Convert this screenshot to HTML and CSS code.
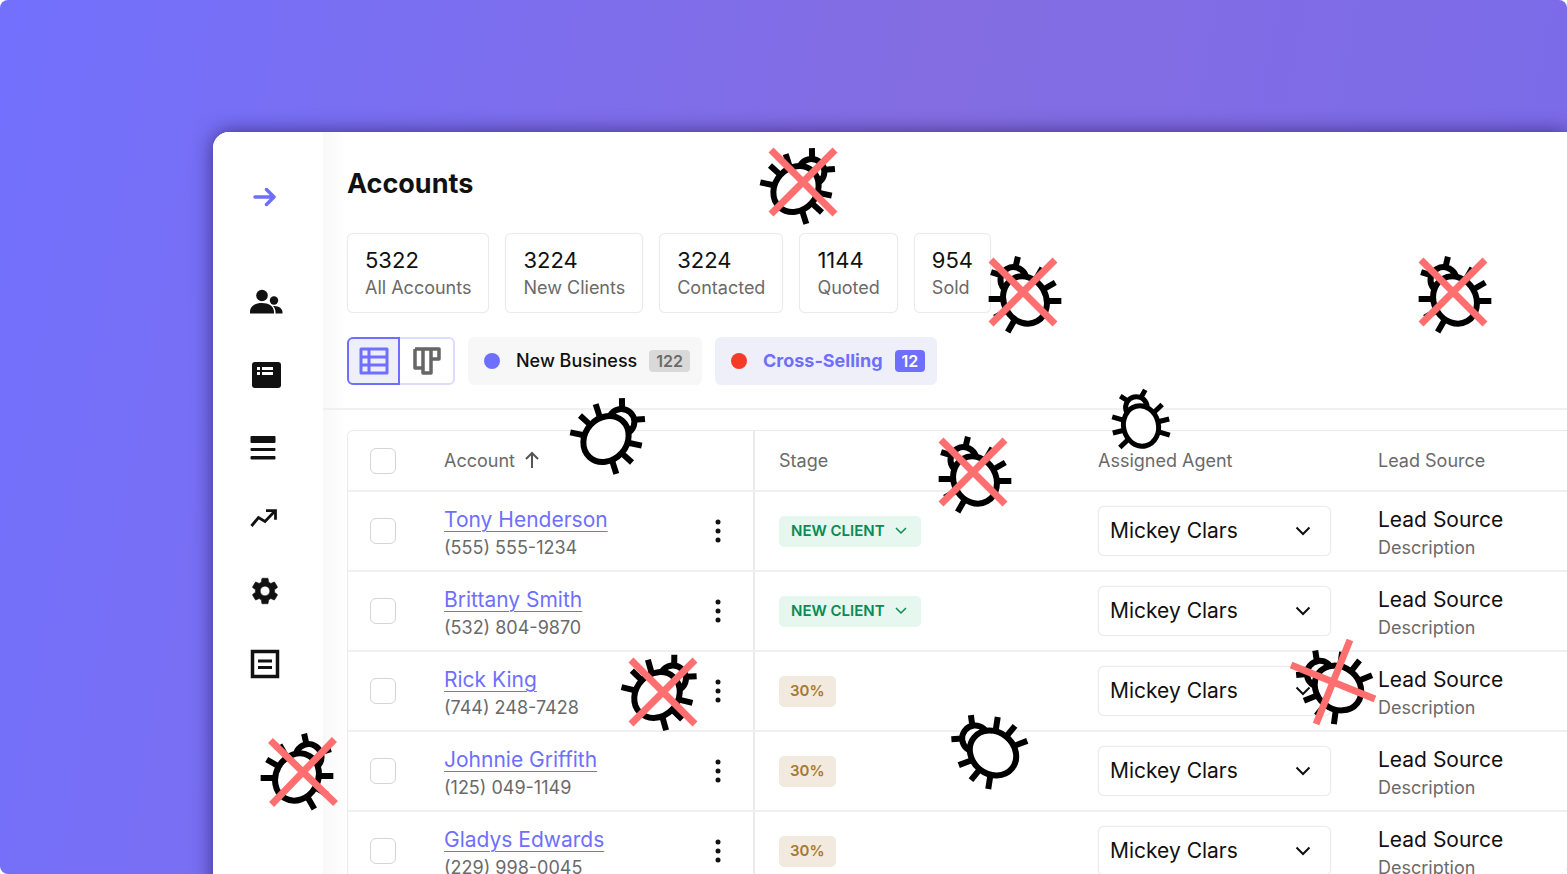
FILE: index.html
```html
<!DOCTYPE html>
<html lang="en">

<head>
    <meta charset="UTF-8">
    <meta name="viewport" content="width=device-width, initial-scale=1.0">
    <title>Accounts</title>
    <link rel="stylesheet" href="styles.css">
</head>
<body>

    <div class="stage">
        <div class="window">

            <nav class="sidebar" aria-label="Main">
                <button type="button" class="side-item expand" aria-label="Expand menu">
                    <svg width="32" height="32" viewBox="0 0 32 32" fill="none" stroke="#6f6fff" stroke-width="3.500" stroke-linecap="round" stroke-linejoin="round"><path d="M6 16h19M17.500 8.500l7.500 7.500-7.500 7.500"/></svg>
                </button>
                <a href="#" class="side-item" aria-label="Accounts">
                    <svg width="36" height="36" viewBox="0 0 36 36" fill="#111"><circle cx="15" cy="10.500" r="5.800"/><circle cx="27" cy="15.500" r="4.200"/><path d="M3 28.500v-1.500C3 21 8.500 18 15 18s12 3 12 9v1.500zM28.500 28.500c.3-3.500-.8-5.500-2.500-7.500 5.500-.5 9.500 2.500 9.500 6v1.500z"/></svg>
                </a>
                <a href="#" class="side-item" aria-label="Tasks">
                    <svg width="32" height="32" viewBox="0 0 32 32"><rect x="3" y="3" width="29" height="26" rx="3" fill="#111"/><path d="M8 8h3v3H8zM13 8h11v3H13zM8 13h3v3H8zM13 13h11v3H13z" fill="#fff"/></svg>
                </a>
                <a href="#" class="side-item" aria-label="Lists">
                    <svg width="32" height="32" viewBox="0 0 32 32" fill="#111"><rect x="1.500" y="5" width="25" height="7" rx="1"/><rect x="1.500" y="17" width="25" height="3" rx="1"/><rect x="1.500" y="25" width="25" height="3.500" rx="1"/></svg>
                </a>
                <a href="#" class="side-item" aria-label="Reports">
                    <svg width="32" height="32" viewBox="0 0 32 32" fill="none" stroke="#111" stroke-width="2.800"><path d="M2.500 23l7-8.500 6.500 4L25.500 8.500M17 7.700h9.500v9"/></svg>
                </a>
                <a href="#" class="side-item" aria-label="Settings">
                    <svg width="32" height="32" viewBox="0 0 24 24" fill="#111" stroke="#111" stroke-width=".4"><path d="M19.140 12.940c.04-.3.060-.61.060-.94 0-.32-.02-.64-.07-.94l2.030-1.580c.18-.14.230-.41.120-.61l-1.920-3.320c-.12-.22-.37-.29-.59-.22l-2.390.96c-.5-.38-1.030-.7-1.620-.94l-.36-2.540c-.04-.24-.24-.41-.48-.41h-3.840c-.24 0-.43.170-.47.410l-.36 2.540c-.59.240-1.130.570-1.620.940l-2.390-.96c-.22-.08-.47 0-.59.220L2.740 8.870c-.12.210-.08.470.120.610l2.030 1.580c-.05.300-.09.630-.09.940s.02.640.070.940l-2.030 1.580c-.18.140-.23.410-.12.610l1.920 3.320c.12.220.370.290.590.220l2.390-.96c.5.380 1.030.700 1.620.940l.36 2.540c.05.240.240.410.480.410h3.840c.24 0 .44-.17.470-.41l.36-2.540c.59-.24 1.130-.56 1.620-.94l2.390.960c.22.080.470 0 .59-.22l1.920-3.320c.12-.22.070-.47-.12-.61l-2.010-1.580zM12 15.600c-1.980 0-3.600-1.620-3.600-3.600s1.620-3.600 3.600-3.600 3.600 1.620 3.600 3.600-1.620 3.600-3.600 3.600z"/></svg>
                </a>
                <a href="#" class="side-item" aria-label="Documents">
                    <svg width="32" height="32" viewBox="0 0 32 32" fill="none" stroke="#111" stroke-width="3.500"><rect x="3.500" y="4.500" width="25" height="25"/><path d="M9 14h14M9 20.500h14" stroke-width="3"/></svg>
                </a>
            </nav>

            <main class="content">
                <header class="page-head">
                    <h1>Accounts</h1>

                    <ul class="stats">
                        <li class="stat"><strong>5322</strong><span>All Accounts</span></li>
                        <li class="stat"><strong>3224</strong><span>New Clients</span></li>
                        <li class="stat"><strong>3224</strong><span>Contacted</span></li>
                        <li class="stat"><strong>1144</strong><span>Quoted</span></li>
                        <li class="stat"><strong>954</strong><span>Sold</span></li>
                    </ul>

                    <div class="filters">
                        <div class="view-toggle">
                            <button type="button" class="view-btn active" aria-label="Table view" aria-pressed="true">
                                <svg width="30" height="28" viewBox="0 0 30 28" fill="none" stroke="#6f6fff" stroke-width="3" stroke-linejoin="round"><path d="M2 2h26v24H2zM10 2v24M2 10h26M2 18h26"/></svg>
                            </button>
                            <button type="button" class="view-btn" aria-label="Board view" aria-pressed="false">
                                <svg width="28" height="28" viewBox="0 0 28 28" fill="none" stroke="#666" stroke-width="3.500" stroke-linejoin="round"><path d="M2 2h24v10h-7M2 2v19h8M10 2v24h8V2"/></svg>
                            </button>
                        </div>
                        <button type="button" class="pill"><i class="dot"></i><span>New Business</span><b class="count">122</b></button>
                        <button type="button" class="pill selected"><i class="dot"></i><span>Cross-Selling</span><b class="count">12</b></button>
                    </div>
                </header>

                <table class="accounts">
                    <colgroup>
                        <col class="col-check">
                        <col class="col-account">
                        <col class="col-stage">
                        <col class="col-agent">
                        <col>
                    </colgroup>
                    <thead>
                        <tr>
                            <th class="check"><input type="checkbox" aria-label="Select all accounts"></th>
                            <th class="account">Account
                                <svg class="sort" width="16" height="18" viewBox="0 0 16 18" fill="none" stroke="#555" stroke-width="2"><path d="M8 17V2M2 8l6-6 6 6"/></svg>
                            </th>
                            <th>Stage</th>
                            <th>Assigned Agent</th>
                            <th>Lead Source</th>
                        </tr>
                    </thead>
                    <tbody id="rows"></tbody>
                </table>
            </main>
        </div>

        <!-- Bugs crawling over the window, some of them crossed out -->
        <svg class="bugs" aria-hidden="true">
            <defs>
                <g id="bug" fill="#fff" stroke="#000" stroke-width="6">
                    <path d="M-8-33l-7.500-8M8-33l7.500-8M-19-12l-12-7M-20 0h-15M-19 12l-12 7M19-12l12-7M20 0h15M19 12l12 7"/>
                    <circle cy="-23" r="13"/>
                    <ellipse rx="21" ry="24.500"/>
                </g>
                <path id="cross" d="M-32-32l64 64M32-32l-64 64" stroke="#ff6f6f" stroke-width="7"/>
            </defs>
            <use href="#bug" transform="translate(796 189) rotate(42)"/>
            <use href="#cross" transform="translate(803 182)"/>
            <use href="#bug" transform="translate(1025 300) rotate(-30)"/>
            <use href="#cross" transform="translate(1023 292)"/>
            <use href="#bug" transform="translate(1455 300) rotate(-30)"/>
            <use href="#cross" transform="translate(1453 292)"/>
            <use href="#bug" transform="translate(606 439) rotate(42)"/>
            <use href="#bug" transform="translate(975 480) rotate(-30)"/>
            <use href="#cross" transform="translate(973 472)"/>
            <use href="#bug" transform="translate(1141 426) rotate(-14) scale(.83)"/>
            <use href="#bug" transform="translate(657 695) rotate(44)"/>
            <use href="#cross" transform="translate(663 692)"/>
            <use href="#bug" transform="translate(1338 688) rotate(-52)"/>
            <use href="#cross" transform="translate(1333 682) rotate(-23)"/>
            <use href="#bug" transform="translate(993 753) rotate(-51)"/>
            <use href="#bug" transform="translate(297 777) rotate(30)"/>
            <use href="#cross" transform="translate(303 772) rotate(-1)"/>
        </svg>
    </div>

    <script src="script.js"></script>
</body>
</html>
```

FILE: styles.css
```css
:root {
    --accent: #6f6fff;
    --accent-soft: #efeffa;
    --text: #111;
    --muted: #6a6a6a;
    --line: #ebebeb;
}

* {
    box-sizing: border-box;
    margin: 0;
    padding: 0;
}

body {
    font-family: Inter, "Liberation Sans", sans-serif;
    font-size: 18px;
    line-height: 28px;
    color: var(--text);
    background: #fff;
}

button, input, select {
    font: inherit;
    color: inherit;
}

button {
    border: 0;
    background: none;
    cursor: pointer;
}

.stage {
    position: relative;
    height: 100vh;
    padding: 132px 0 0 213px;
    overflow: hidden;
    border-radius: 8px;
    background: linear-gradient(100deg, #7270fd 0%, #7c6eee 30%, #846de2 55%, #7a6bea 100%);
}

.window {
    display: flex;
    min-height: 100%;
    background: #fff;
    border-radius: 16px 0 0 0;
    box-shadow: 0 0 20px rgba(30, 15, 80, 0.65);
}

/* Sidebar */
.sidebar {
    display: flex;
    flex: none;
    flex-direction: column;
    align-items: center;
    gap: 24px;
    width: 110px;
    padding: 41px 6px 0 0;
    border-radius: 16px 0 0 0;
    background: #fff;
}

.side-item {
    display: flex;
    align-items: center;
    justify-content: center;
    width: 48px;
    height: 48px;
}

.expand {
    margin-bottom: 34px;
}

/* Content */
.content {
    flex: 1;
    min-width: 0;
    background: linear-gradient(90deg, #f8f8f8, #fff 24px);
}

.page-head {
    padding: 36px 24px 23px;
    border-bottom: 2px solid #f0f0f0;
}

h1 {
    font-size: 27px;
    line-height: 32px;
}

.stats {
    display: flex;
    gap: 16px;
    margin: 33px 0 24px;
    list-style: none;
}

.stat {
    display: flex;
    flex-direction: column;
    padding: 12px 17px 10px;
    border: 1px solid var(--line);
    border-radius: 6px;
    background: #fff;
    box-shadow: 0 0 1px var(--line);
}

.stat strong {
    font-size: 22px;
    font-weight: 400;
}

.stat span {
    color: var(--muted);
}

.filters {
    display: flex;
    gap: 13px;
}

.view-toggle {
    display: flex;
}

.view-btn {
    display: flex;
    align-items: center;
    justify-content: center;
    width: 55px;
    height: 48px;
    border: 2px solid #dcdcff;
    border-left: 0;
    border-radius: 0 6px 6px 0;
    background: #fff;
}

.view-btn.active {
    width: 53px;
    border: 2px solid var(--accent);
    border-radius: 6px 0 0 6px;
    background: var(--accent-soft);
}

.pill {
    display: flex;
    align-items: center;
    height: 48px;
    padding: 0 12px 0 16px;
    border-radius: 6px;
    background: #f7f7f7;
    font-weight: 500;
}

.pill span {
    margin: 0 12px 0 16px;
}

.dot {
    width: 16px;
    height: 16px;
    border-radius: 50%;
    background: var(--accent);
}

.count {
    padding: 0 7px;
    border-radius: 4px;
    background: #d9d9d9;
    color: #6a6a6a;
    font-size: 16px;
    font-weight: 600;
    line-height: 22px;
}

.pill.selected {
    background: var(--accent-soft);
    color: var(--accent);
    font-weight: 700;
}

.selected .dot {
    background: #f43b28;
}

.selected .count {
    background: var(--accent);
    color: #fff;
}

/* Accounts table */
.accounts {
    width: calc(100% - 24px);
    margin: 20px 0 0 24px;
    border: 1px solid var(--line);
    border-right: 0;
    border-radius: 6px 0 0 0;
    border-spacing: 0;
    table-layout: fixed;
    background: #fff;
}

.col-check { width: 72px; }
.col-account { width: 335px; }
.col-stage { width: 319px; }
.col-agent { width: 280px; }

.accounts th,
.accounts td {
    padding: 0 0 0 24px;
    border-bottom: 2px solid #f0f0f0;
    text-align: left;
    white-space: nowrap;
}

.accounts th {
    height: 61px;
    color: var(--muted);
    font-weight: 400;
}

.accounts td {
    height: 80px;
}

.accounts .check {
    padding-left: 22px;
}

.accounts .account {
    border-right: 2px solid var(--line);
}

.check input {
    display: block;
    width: 26px;
    height: 26px;
    border: 1px solid #d5d5d5;
    border-radius: 6px;
    background: #fff;
    appearance: none;
}

.sort {
    margin-left: 4px;
    vertical-align: -2px;
}

.person {
    display: flex;
    align-items: center;
    justify-content: space-between;
    padding-right: 20px;
}

.two-lines {
    padding-top: 5px;
    color: var(--muted);
}

.two-lines p:first-child {
    color: var(--text);
    font-size: 21px;
}

.name {
    color: var(--accent);
    text-decoration: underline;
    text-decoration-thickness: 1px;
    text-underline-offset: 4px;
}

.more {
    display: flex;
    justify-content: center;
    width: 30px;
}

.badge {
    display: inline-flex;
    align-items: center;
    gap: 10px;
    height: 31px;
    padding: 0 12px;
    border-radius: 5px;
    font-size: 15px;
    font-weight: 600;
}

.badge.new {
    padding-right: 14px;
    background: #e5f7ef;
    color: #0b8a54;
}

.badge.progress {
    padding: 0 11px;
    background: #f3eadf;
    color: #a67833;
}

.agent {
    position: relative;
    width: 233px;
}

.agent select {
    display: block;
    width: 100%;
    height: 50px;
    padding-left: 11px;
    border: 1px solid var(--line);
    border-radius: 6px;
    background: #fff;
    box-shadow: 0 0 1px var(--line);
    font-size: 21px;
    appearance: none;
}

.agent svg {
    position: absolute;
    top: 20px;
    right: 20px;
    pointer-events: none;
}

.bugs {
    position: absolute;
    top: 0;
    left: 0;
    width: 100%;
    height: 100%;
    pointer-events: none;
}
```

FILE: script.js
```js
const accounts = [
    { name: 'Tony Henderson', phone: '(555) 555-1234', stage: 'NEW CLIENT' },
    { name: 'Brittany Smith', phone: '(532) 804-9870', stage: 'NEW CLIENT' },
    { name: 'Rick King', phone: '(744) 248-7428', stage: '30%' },
    { name: 'Johnnie Griffith', phone: '(125) 049-1149', stage: '30%' },
    { name: 'Gladys Edwards', phone: '(229) 998-0045', stage: '30%' }
];

function stageBadge(stage) {
    if (stage === 'NEW CLIENT') {
        return `<button type="button" class="badge new">${stage}
            <svg width="12" height="8" viewBox="0 0 12 8" fill="none" stroke="currentColor" stroke-width="1.500"><path d="M1 1l5 5 5-5"/></svg>
        </button>`;
    }
    return `<span class="badge progress">${stage}</span>`;
}

function createRow(account) {
    return `
        <tr>
            <td class="check"><input type="checkbox" aria-label="Select ${account.name}"></td>
            <td class="account">
                <div class="person">
                    <div class="two-lines">
                        <p><a href="#" class="name">${account.name}</a></p>
                        <p>${account.phone}</p>
                    </div>
                    <button type="button" class="more" aria-label="More actions">
                        <svg width="6" height="24" viewBox="0 0 6 24" fill="#111"><circle cx="3" cy="3" r="2.500"/><circle cx="3" cy="12" r="2.500"/><circle cx="3" cy="21" r="2.500"/></svg>
                    </button>
                </div>
            </td>
            <td>${stageBadge(account.stage)}</td>
            <td>
                <div class="agent">
                    <select aria-label="Assigned agent for ${account.name}"><option>Mickey Clars</option></select>
                    <svg width="16" height="10" viewBox="0 0 16 10" fill="none" stroke="#111" stroke-width="2"><path d="M1.500 1.500L8 8l6.500-6.500"/></svg>
                </div>
            </td>
            <td>
                <div class="two-lines">
                    <p>Lead Source</p>
                    <p>Description</p>
                </div>
            </td>
        </tr>
    `;
}

document.getElementById('rows').innerHTML = accounts.map(createRow).join('');
```
